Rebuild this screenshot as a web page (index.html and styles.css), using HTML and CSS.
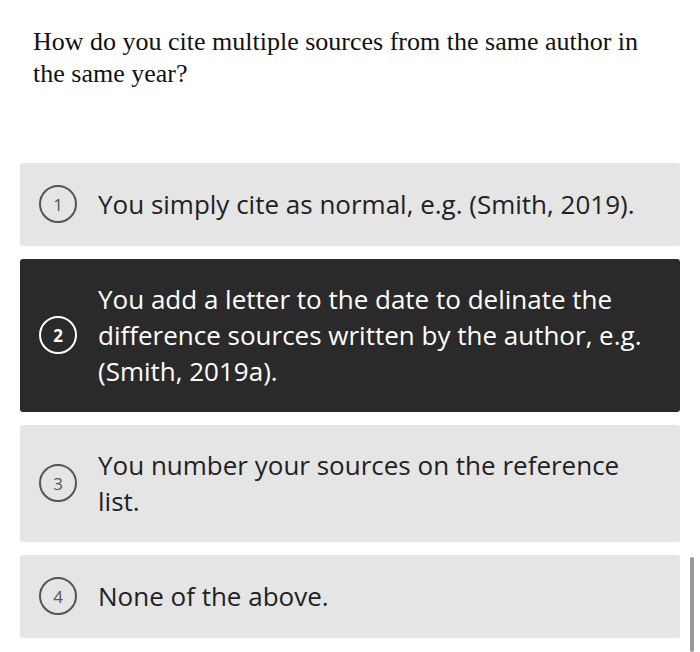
FILE: index.html
```html
<!DOCTYPE html>
<html>
<head>
<meta charset="utf-8">
<link rel="stylesheet" href="styles.css">
</head>
<body>
<div class="page">
  <p class="question">How do you cite multiple sources from the same author in the same year?</p>
  <div class="options">
    <div class="option">
      <span class="num">1</span>
      <span class="text">You simply cite as normal, e.g. (Smith, 2019).</span>
    </div>
    <div class="option selected">
      <span class="num">2</span>
      <span class="text">You add a letter to the date to delinate the difference sources written by the author, e.g. (Smith, 2019a).</span>
    </div>
    <div class="option">
      <span class="num">3</span>
      <span class="text">You number your sources on the reference list.</span>
    </div>
    <div class="option">
      <span class="num">4</span>
      <span class="text">None of the above.</span>
    </div>
  </div>
  <div class="scrollbar"></div>
</div>
</body>
</html>
```
FILE: styles.css
```css
html, body {
  margin: 0;
  padding: 0;
  background: #fff;
}
.page {
  position: relative;
  width: 700px;
  height: 652px;
  overflow: hidden;
}
.question {
  margin: 0;
  padding: 26px 40px 0 33px;
  font-family: "Liberation Serif", "Times New Roman", serif;
  font-size: 26px;
  line-height: 32px;
  color: #111;
}
.options {
  display: flex;
  flex-direction: column;
  gap: 13px;
  margin: 73px 20px 0 20px;
}
.option {
  display: flex;
  align-items: center;
  gap: 21px;
  padding: 22px 20px 23px 19px;
  background: #e5e5e5;
  border-radius: 3px;
  font-family: "Open Sans", sans-serif;
  font-size: 26px;
  line-height: 36px;
  color: #222;
}
.option.selected {
  background: #2a2a2a;
  color: #fff;
}
.num {
  flex: 0 0 auto;
  width: 34px;
  height: 34px;
  border: 2px solid #555;
  border-radius: 50%;
  display: flex;
  align-items: center;
  justify-content: center;
  font-size: 17px;
  line-height: 1;
  color: #555;
}
.selected .num {
  border-color: #fff;
  color: #fff;
  font-weight: 700;
}
.scrollbar {
  position: absolute;
  left: 690px;
  top: 557px;
  width: 4px;
  height: 95px;
  background: #999;
  border-radius: 2px;
}
```
